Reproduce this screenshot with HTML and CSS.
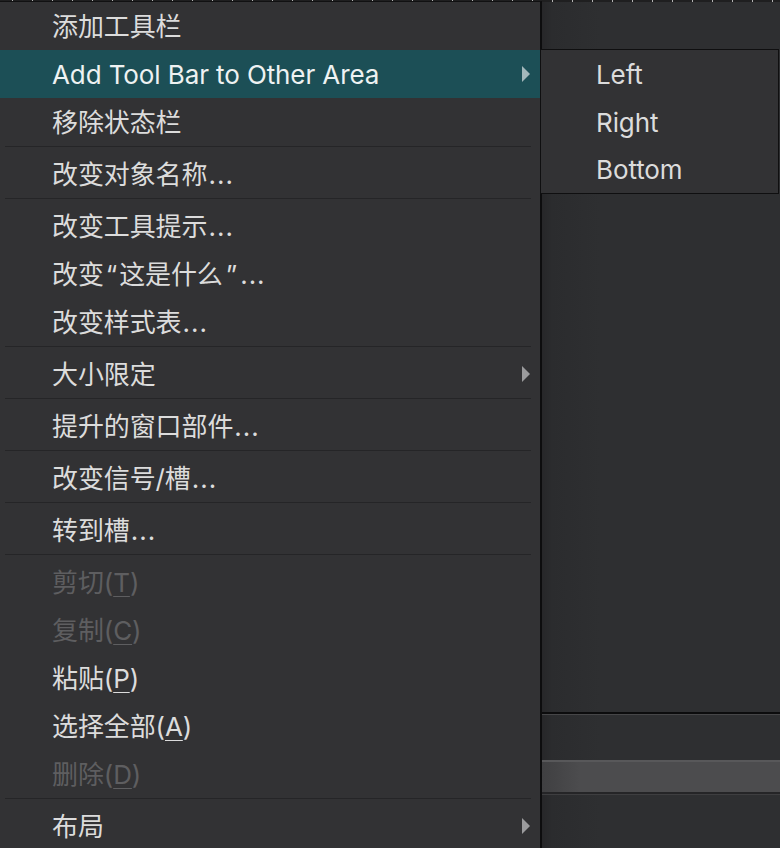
FILE: index.html
```html
<!DOCTYPE html>
<html lang="zh-CN">
<head>
<meta charset="utf-8">
<title>Context menu</title>
<link rel="stylesheet" href="styles.css">
</head>
<body>
<div class="app">
  <div class="topstrip"></div>
  <div class="pane pane-main"></div>
  <div class="split split-a"></div>
  <div class="pane pane-mid"></div>
  <div class="bar"></div>
  <div class="split split-b"></div>
  <div class="pane pane-low"></div>
</div>

<div class="menu">
  <div class="item">添加工具栏</div>
  <div class="item active has-sub">Add Tool Bar to Other Area<span class="arrow"></span></div>
  <div class="item">移除状态栏</div>
  <div class="sep"></div>
  <div class="item">改变对象名称<span class="dots">...</span></div>
  <div class="sep"></div>
  <div class="item">改变工具提示<span class="dots">...</span></div>
  <div class="item">改变<span class="q ql">“</span>这是什么<span class="q qr">”</span><span class="dots">...</span></div>
  <div class="item">改变样式表<span class="dots">...</span></div>
  <div class="sep"></div>
  <div class="item has-sub">大小限定<span class="arrow"></span></div>
  <div class="sep"></div>
  <div class="item">提升的窗口部件<span class="dots">...</span></div>
  <div class="sep"></div>
  <div class="item">改变信号/槽<span class="dots">...</span></div>
  <div class="sep"></div>
  <div class="item">转到槽<span class="dots">...</span></div>
  <div class="sep"></div>
  <div class="item disabled">剪切(<u>T</u>)</div>
  <div class="item disabled">复制(<u>C</u>)</div>
  <div class="item">粘贴(<u>P</u>)</div>
  <div class="item">选择全部(<u>A</u>)</div>
  <div class="item disabled">删除(<u>D</u>)</div>
  <div class="sep"></div>
  <div class="item has-sub">布局<span class="arrow"></span></div>
</div>

<div class="submenu">
  <div class="subitem">Left</div>
  <div class="subitem">Right</div>
  <div class="subitem">Bottom</div>
</div>
</body>
</html>
```

FILE: styles.css
```css
html, body {
  margin: 0;
  padding: 0;
}
body {
  width: 780px;
  height: 848px;
  overflow: hidden;
  position: relative;
  background: #2e2f31;
  font-family: "Inter", "Noto Sans CJK SC", "Noto Sans", sans-serif;
  -webkit-font-smoothing: antialiased;
}

/* background application window */
.app {
  display: flex;
  flex-direction: column;
  height: 848px;
}
.topstrip {
  height: 2px;
  background-color: #1f1f20;
  background-image: repeating-linear-gradient(90deg, transparent 0 12px, #b5b5b5 12px 13px, transparent 13px 20px);
}
.pane {
  background: linear-gradient(90deg, #262628 540px, #2b2c2e 552px, #2e2f31 600px);
}
.pane-main { flex: 1; }
.pane-mid { height: 45px; }
.pane-low { height: 53px; }
.split-a {
  height: 2px;
  background: #0c0c0d;
  border-bottom: 1px solid #464648;
}
.bar {
  height: 30px;
  background: linear-gradient(90deg, #3f3f41 540px, #4c4c4e 580px);
  border-top: 2px solid #58585a;
}
.split-b {
  height: 2px;
  background: #252527;
  border-bottom: 1px solid #3e3e40;
}

/* main context menu */
.menu {
  position: absolute;
  left: 0;
  top: 1px;
  width: 540px;
  background: #323234;
  border-top: 1px solid #111112;
  border-right: 2px solid #0d0d0e;
  display: flex;
  flex-direction: column;
}
.item {
  box-sizing: border-box;
  height: 48px;
  line-height: 48px;
  padding-top: 1px;
  padding-left: 52px;
  font-size: 26px;
  color: #dcdcdc;
  white-space: nowrap;
  position: relative;
  letter-spacing: -0.1px;
}
.item.active {
  background: #1c4f56;
  color: #eef2f2;
}
.item.disabled {
  color: #5e5e60;
}
.item u {
  text-decoration-thickness: 1px;
  text-underline-offset: 4px;
}
.dots {
  letter-spacing: 1px;
  margin-left: 1px;
}
.ql {
  margin-left: 2px;
  margin-right: 2px;
}
.qr {
  margin-left: 3px;
  margin-right: 2px;
}
.sep {
  height: 4px;
  box-sizing: border-box;
  margin: 0 9px 0 5px;
  border-top: 1px solid #252527;
}
.arrow {
  position: absolute;
  left: 522px;
  top: 16px;
  width: 0;
  height: 0;
  border-top: 8px solid transparent;
  border-bottom: 8px solid transparent;
  border-left: 8px solid #9b9b9d;
}
.item.active .arrow {
  border-left-color: #a3b8bb;
}

/* submenu */
.submenu {
  position: absolute;
  left: 540px;
  top: 49px;
  width: 237px;
  background: #323234;
  border: 1px solid #0f0f10;
  display: flex;
  flex-direction: column;
}
.subitem {
  box-sizing: border-box;
  height: 47.5px;
  line-height: 48px;
  padding-top: 1px;
  padding-left: 55px;
  font-size: 26px;
  color: #dcdcdc;
  letter-spacing: -0.1px;
}
```
